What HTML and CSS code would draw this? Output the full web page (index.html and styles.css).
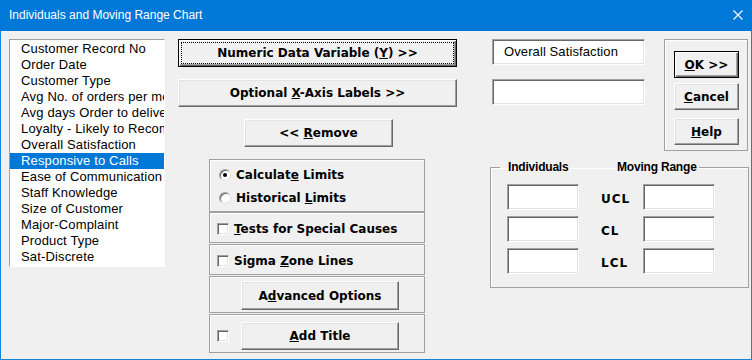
FILE: index.html
```html
<!DOCTYPE html>
<html lang="en">

<head>
    <meta charset="UTF-8">
    <title>Individuals and Moving Range Chart</title>
    <link rel="stylesheet" href="styles.css">
</head>

<body>
    <div class="window">
        <!-- Title Bar -->
        <div class="titlebar">
            <span class="title">Individuals and Moving Range Chart</span>
            <svg class="close" width="10" height="10" viewBox="0 0 10 10">
                <path d="M0.5 0.5 L9.5 9.5 M9.5 0.5 L0.5 9.5" stroke="#fff" stroke-width="1.1" fill="none" />
            </svg>
        </div>

        <div class="client">
            <!-- Variable List -->
            <ul class="listbox">
                <li>Customer Record No</li>
                <li>Order Date</li>
                <li>Customer Type</li>
                <li>Avg No. of orders per month</li>
                <li>Avg days Order to delivery</li>
                <li>Loyalty - Likely to Recommend</li>
                <li>Overall Satisfaction</li>
                <li class="selected">Responsive to Calls</li>
                <li>Ease of Communication</li>
                <li>Staff Knowledge</li>
                <li>Size of Customer</li>
                <li>Major-Complaint</li>
                <li>Product Type</li>
                <li>Sat-Discrete</li>
            </ul>

            <!-- Middle Column -->
            <div class="middle">
                <button class="btn btn-wide btn-default"><span class="focus">Numeric Data Variable (<u>Y</u>) &gt;&gt;</span></button>
                <button class="btn btn-wide btn-gap">Optional <u>X</u>-Axis Labels &gt;&gt;</button>
                <button class="btn btn-remove">&lt;&lt; <u>R</u>emove</button>

                <div class="options">
                    <div class="frame frame-limits">
                        <div class="option"><span class="radio checked"></span><span>Calculat<u>e</u> Limits</span></div>
                        <div class="option"><span class="radio"></span><span>Historical <u>L</u>imits</span></div>
                    </div>
                    <div class="frame frame-check">
                        <span class="checkbox"></span><span class="bold"><u>T</u>ests for Special Causes</span>
                    </div>
                    <div class="frame frame-check frame-next">
                        <span class="checkbox"></span><span class="bold">Sigma <u>Z</u>one Lines</span>
                    </div>
                    <div class="frame frame-advanced frame-next">
                        <button class="btn btn-option">A<u>d</u>vanced Options</button>
                    </div>
                    <div class="frame frame-title frame-next">
                        <span class="checkbox"></span>
                        <button class="btn btn-option btn-title"><u>A</u>dd Title</button>
                    </div>
                </div>
            </div>

            <!-- Right Column -->
            <div class="right">
                <div class="right-top">
                    <div class="fields">
                        <div class="edit">Overall Satisfaction</div>
                        <div class="edit"></div>
                    </div>
                    <div class="frame cmd-frame">
                        <button class="btn btn-cmd btn-ok"><u>O</u>K &gt;&gt;</button>
                        <button class="btn btn-cmd btn-cancel"><u>C</u>ancel</button>
                        <button class="btn btn-cmd btn-help"><u>H</u>elp</button>
                    </div>
                </div>

                <fieldset class="limits">
                    <legend><span class="legend-ind">Individuals</span><span>Moving Range</span></legend>
                    <div class="limits-grid">
                        <div class="edit"></div>
                        <span class="limit-label">UCL</span>
                        <div class="edit"></div>
                        <div class="edit"></div>
                        <span class="limit-label">CL</span>
                        <div class="edit"></div>
                        <div class="edit"></div>
                        <span class="limit-label">LCL</span>
                        <div class="edit"></div>
                    </div>
                </fieldset>
            </div>
        </div>
    </div>
</body>

</html>
```

FILE: styles.css
```css
/* Reset */
* {
    margin: 0;
    padding: 0;
    box-sizing: border-box;
}

body {
    background: #f0f0f0;
    font-family: "Liberation Sans", Arial, sans-serif;
    color: #000;
}

/* Window frame */
.window {
    width: 752px;
    height: 360px;
    border: 1px solid #1883d7;
    border-top: none;
    background: #f0f0f0;
}

.titlebar {
    height: 31px;
    margin: 0 -1px;
    padding: 0 9px 1px 9px;
    background: #0078d7;
    color: #fff;
    display: flex;
    align-items: center;
    justify-content: space-between;
    font-size: 12px;
    font-weight: normal;
}

.client {
    display: flex;
    align-items: flex-start;
    padding: 8px 0 0 8px;
}

/* List box */
.listbox {
    width: 156px;
    height: 228px;
    list-style: none;
    background: #fff;
    border: 1px solid;
    border-color: #a0a0a0 #fff #fff #a0a0a0;
    padding-top: 1px;
    overflow: hidden;
    font-size: 13px;
    letter-spacing: 0.15px;
}

.listbox li {
    height: 16px;
    line-height: 16px;
    padding-left: 11px;
    white-space: nowrap;
}

.listbox li.selected {
    background: #0078d7;
    color: #fff;
}

/* Buttons */
.btn {
    padding: 0;
    text-align: center;
    background: #f0f0f0;
    border: 1px solid;
    border-color: #fff #696969 #696969 #fff;
    box-shadow: inset -1px -1px #a0a0a0, inset 1px 1px #e3e3e3;
    font-family: "DejaVu Sans", sans-serif;
    font-weight: bold;
    font-size: 12px;
    color: #000;
}

.btn-default {
    border: 1px solid #000;
    box-shadow: inset 1px 1px #fff, inset -1px -1px #696969, inset -2px -2px #a0a0a0;
    padding: 2px;
}

.focus {
    display: block;
    height: 22px;
    line-height: 20px;
    border: 1px dotted #000;
}

.middle {
    width: 279px;
    margin-left: 13px;
    display: flex;
    flex-direction: column;
    align-items: flex-start;
}

.btn-wide {
    width: 279px;
    height: 28px;
}

.btn-gap {
    margin-top: 12px;
}

.btn-remove {
    width: 149px;
    height: 28px;
    margin: 12px 0 0 66px;
}

/* Option frames */
.options {
    width: 216px;
    margin: 12px 0 0 31px;
    display: flex;
    flex-direction: column;
}

.frame {
    border: 1px solid #a0a0a0;
    box-shadow: inset 1px 1px #fff;
}

.frame-next {
    margin-top: 1px;
}

.frame-limits {
    height: 53px;
    padding: 5px 0 0 9px;
    display: flex;
    flex-direction: column;
    gap: 3px;
}

.option,
.bold {
    font-family: "DejaVu Sans", sans-serif;
    font-weight: bold;
    font-size: 12px;
}

.option {
    height: 20px;
    display: flex;
    align-items: center;
    gap: 5px;
}

.radio {
    width: 12px;
    height: 12px;
    border-radius: 50%;
    background: #fff;
    border: 1px solid;
    border-color: #a0a0a0 #e3e3e3 #e3e3e3 #a0a0a0;
    box-shadow: inset 1px 1px #696969;
    display: flex;
    align-items: center;
    justify-content: center;
}

.radio.checked::after {
    content: "";
    width: 4px;
    height: 4px;
    border-radius: 50%;
    background: #000;
}

.frame-check {
    height: 31px;
    padding: 2px 0 0 7px;
    display: flex;
    align-items: center;
    gap: 5px;
}

.checkbox {
    width: 12px;
    height: 12px;
    flex-shrink: 0;
    background: #fff;
    border: 1px solid;
    border-color: #a0a0a0 #fff #fff #a0a0a0;
    box-shadow: inset 1px 1px #696969, inset -1px -1px #e3e3e3;
}

.frame-advanced {
    height: 37px;
    padding: 4px 0 0 31px;
}

.btn-option {
    width: 158px;
    height: 29px;
}

.frame-title {
    height: 39px;
    padding: 4px 0 0 7px;
    display: flex;
    align-items: center;
}

.btn-title {
    height: 28px;
    margin-left: 12px;
}

/* Right column */
.right {
    margin-left: 35px;
    display: flex;
    flex-direction: column;
}

.right-top {
    display: flex;
    align-items: flex-start;
}

.fields {
    width: 153px;
    display: flex;
    flex-direction: column;
    gap: 14px;
}

.edit {
    height: 26px;
    background: #fff;
    border: 1px solid;
    border-color: #a0a0a0 #fff #fff #a0a0a0;
    box-shadow: inset 1px 1px #696969, inset -1px -1px #e3e3e3;
    padding-left: 11px;
    line-height: 24px;
    font-size: 13px;
    letter-spacing: 0.1px;
}

.cmd-frame {
    width: 84px;
    height: 112px;
    margin-left: 19px;
    padding: 11px 0 0 9px;
    display: flex;
    flex-direction: column;
    gap: 5px;
}

.btn-cmd {
    width: 65px;
    height: 27px;
}

.btn-ok {
    border: 1px solid #000;
    box-shadow: inset 1px 1px #fff, inset -1px -1px #696969, inset -2px -2px #a0a0a0;
}

.btn-help {
    margin-top: 3px;
}

/* Limits group */
.limits {
    width: 259px;
    height: 127px;
    margin: 10px 0 0 -2px;
    border: 1px solid #a0a0a0;
    box-shadow: inset 1px 1px #fff;
    padding: 0;
}

.limits legend {
    margin-left: 9px;
    padding: 0 2px 0 8px;
    font-weight: bold;
    font-size: 12px;
    letter-spacing: -0.2px;
    line-height: 13px;
}

.legend-ind {
    display: inline-block;
    width: 109px;
}

.limits-grid {
    display: grid;
    grid-template-columns: 72px 64px 72px;
    grid-auto-rows: 26px;
    row-gap: 6px;
    padding: 10px 0 0 16px;
}

.limit-label {
    padding: 8px 0 0 22px;
    font-family: "DejaVu Sans", sans-serif;
    font-weight: bold;
    font-size: 12px;
    letter-spacing: 1px;
}
```
